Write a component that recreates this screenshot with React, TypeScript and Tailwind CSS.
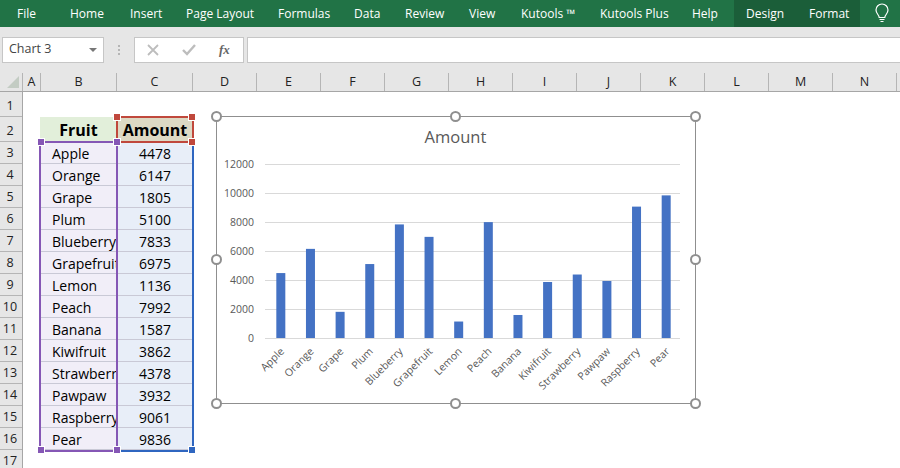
const TABS: [string, number][] = [
  ['File', 53], ['Home', 60], ['Insert', 56], ['Page Layout', 92], ['Formulas', 76], ['Data', 51],
  ['Review', 64], ['View', 52], ['Kutools ™', 79], ['Kutools Plus', 92], ['Help', 42],
];
const COLS: [string, number][] = [
  ['A', 18], ['B', 76], ['C', 76], ['D', 64], ['E', 64], ['F', 64], ['G', 64], ['H', 64],
  ['I', 64], ['J', 64], ['K', 64], ['L', 64], ['M', 64], ['N', 64],
];
const DATA: [string, number][] = [
  ['Apple', 4478], ['Orange', 6147], ['Grape', 1805], ['Plum', 5100], ['Blueberry', 7833],
  ['Grapefruit', 6975], ['Lemon', 1136], ['Peach', 7992], ['Banana', 1587], ['Kiwifruit', 3862],
  ['Strawberry', 4378], ['Pawpaw', 3932], ['Raspberry', 9061], ['Pear', 9836],
];
const ROWS = Array.from({ length: 17 }, (_, i) => i + 1);
const TICKS = [0, 2000, 4000, 6000, 8000, 10000, 12000];

function Square({ cls, pos }: { cls: string; pos: string }) {
  return <div className={`absolute w-[8px] h-[8px] border border-white ${cls} ${pos}`} />;
}

function Handle({ pos }: { pos: string }) {
  return <div className={`absolute w-[11px] h-[11px] rounded-full bg-white border-2 border-[#8f8f8f] ${pos}`} />;
}

function Chart() {
  // chart drawing, coords relative to chart box (216,116)
  const x0 = 48, x1 = 463, y0 = 221, h = 174;
  const step = (x1 - x0) / DATA.length;
  return (
    <div className="absolute left-[216px] top-[116px] w-[480px] h-[288px] bg-white border border-[#8f8f8f]">
      <svg width={478} height={286} className="absolute left-0 top-0">
        <text x={238.5} y={26} textAnchor="middle" fontSize="16.5" fill="#595959" fontFamily="'Open Sans', sans-serif">Amount</text>
        {TICKS.map(t => {
          const y = y0 - (t / 12000) * h;
          return (
            <g key={t}>
              <line x1={x0} x2={x1} y1={y + 0.5} y2={y + 0.5} stroke="#d9d9d9" />
              <text x={37} y={y + 4} textAnchor="end" fontSize="10.5" fill="#595959" fontFamily="'Open Sans', sans-serif">{t}</text>
            </g>
          );
        })}
        {DATA.map(([name, v], i) => {
          const cx = x0 + 1 + step * (i + 0.5);
          const bh = (v / 12000) * h;
          return (
            <g key={name}>
              <rect x={cx - 4.5} y={y0 - bh} width={9} height={bh} fill="#4472c4" />
              <text
                transform={`translate(${cx + 4},${y0 + 14}) rotate(-45)`}
                textAnchor="end"
                fontSize="10.5"
                fill="#595959"
                fontFamily="'Open Sans', sans-serif"
              >
                {name}
              </text>
            </g>
          );
        })}
      </svg>
      <Handle pos="left-[-6px] top-[-6px]" />
      <Handle pos="left-[233px] top-[-6px]" />
      <Handle pos="right-[-6px] top-[-6px]" />
      <Handle pos="left-[-6px] top-[137px]" />
      <Handle pos="right-[-6px] top-[137px]" />
      <Handle pos="left-[-6px] bottom-[-6px]" />
      <Handle pos="left-[233px] bottom-[-6px]" />
      <Handle pos="right-[-6px] bottom-[-6px]" />
    </div>
  );
}

export default function App() {
  return (
    <div className="relative w-[900px] h-[468px] overflow-hidden bg-white font-['Open_Sans',sans-serif] text-black">
      {/* Ribbon tabs */}
      <div className="flex items-center h-[27px] bg-[#217346] text-white text-[12px] pl-[17px]">
        {TABS.map(([t, w]) => (
          <div key={t} className="shrink-0 whitespace-nowrap" style={{ width: w }}>{t}</div>
        ))}
        <div className="flex items-center h-full w-[126px] bg-[#1b5e39] pl-[12px]">
          <div className="w-[63px]">Design</div>
          <div>Format</div>
        </div>
        <svg width="16" height="21" viewBox="0 0 16 21" className="ml-[14px]" fill="none" stroke="#fff" strokeWidth="1.2">
          <path d="M5.2 14.5c0-2.5-3.2-3.8-3.2-7.5a6 6 0 0 1 12 0c0 3.7-3.200 5-3.200 7.500z" />
          <path d="M5.500 16.500h5M6.500 18.500h3" />
        </svg>
      </div>

      {/* Formula bar */}
      <div className="flex items-center h-[46px] bg-[#e6e6e6] pl-[2px] pb-[1px]">
        <div className="flex items-center justify-between w-[102px] h-[26px] bg-white border border-[#c6c6c6] pl-[6px] pr-[6px] text-[12.500px] text-[#444]">
          <span>Chart 3</span>
          <div className="w-0 h-0 border-l-[4px] border-r-[4px] border-t-[4px] border-l-transparent border-r-transparent border-t-[#777]" />
        </div>
        <div className="flex flex-col gap-[2px] ml-[14px] w-[2px]">
          <div className="w-[2px] h-[2px] bg-[#b5b5b5]" />
          <div className="w-[2px] h-[2px] bg-[#b5b5b5]" />
          <div className="w-[2px] h-[2px] bg-[#b5b5b5]" />
        </div>
        <div className="flex items-center w-[110px] h-[26px] ml-[14px] bg-white border border-[#c6c6c6]">
          <svg width="12" height="12" viewBox="0 0 12 12" className="ml-[12px]" stroke="#bdbdbd" strokeWidth="1.800" fill="none">
            <path d="M1 1l10 10M11 1L1 11" />
          </svg>
          <svg width="14" height="12" viewBox="0 0 14 12" className="ml-[23px]" stroke="#bdbdbd" strokeWidth="2.400" fill="none">
            <path d="M1 6l4 4 8-9" />
          </svg>
          <span className="ml-[23px] font-['Liberation_Serif',serif] italic font-bold text-[13px] text-[#666]">fx</span>
        </div>
        <div className="flex-1 h-[26px] ml-[3px] bg-white border border-[#c6c6c6] border-r-0" />
      </div>

      {/* Column headers */}
      <div className="flex h-[19px] bg-[#e6e6e6] border-b border-[#a6a6a6] text-[12.500px] text-[#222]">
        <div className="relative w-[23px] shrink-0 border-r border-[#b5b5b5]">
          <div className="absolute left-[7px] top-[3px] w-0 h-0 border-l-[12px] border-b-[12px] border-l-transparent border-b-[#c3ccc3]" />
        </div>
        {COLS.map(([c, w]) => (
          <div key={c} className="flex items-center justify-center shrink-0 border-r border-[#b5b5b5]" style={{ width: w }}>{c}</div>
        ))}
      </div>

      {/* Sheet */}
      <div className="flex h-[376px]">
        <div className="w-[23px] shrink-0 bg-[#e6e6e6] border-r border-[#a6a6a6] text-[12.500px] text-[#222]">
          {ROWS.map(r => (
            <div
              key={r}
              className={`flex items-end justify-center pr-[2px] border-b border-[#b5b5b5] ${r < 3 ? 'h-[25px]' : 'h-[22px]'}`}
            >
              {r}
            </div>
          ))}
        </div>
        <div className="pl-[17px] pt-[25px]">
          <div className="relative w-[152px]">
            <div className="grid grid-cols-[77px_76px] text-[14px]">
              <div className="flex items-center justify-center h-[25px] bg-[#e2efda] font-bold text-[16px]">Fruit</div>
              <div className="flex items-center justify-center h-[25px] bg-[#ddd9c4] font-bold text-[16px]">Amount</div>
              {DATA.map(([name, v]) => (
                <div key={name} className="contents">
                  <div className="flex items-center h-[22px] pt-[2px] pl-[12px] pr-[2px] bg-[#f1eef8] border-b border-[#c9c9d6] overflow-hidden whitespace-nowrap">{name}</div>
                  <div className="flex items-center justify-center h-[22px] pt-[2px] bg-[#e8eef8] border-b border-[#c9c9d6]">{v}</div>
                </div>
              ))}
            </div>
            {/* range selection outlines */}
            <div className="absolute left-[-1px] top-[24px] w-[79px] h-[311px] border-2 border-[#8557b5]" />
            <div className="absolute left-[78px] top-[25px] w-[76px] h-[310px] border-2 border-[#2f66c0] border-l-0 border-t-0" />
            <div className="absolute left-[76px] top-[-1px] w-[78px] h-[27px] border-2 border-[#c0483c]" />
            <Square cls="bg-[#c0483c]" pos="left-[73px] top-[-4px]" />
            <Square cls="bg-[#c0483c]" pos="left-[148px] top-[-4px]" />
            <Square cls="bg-[#c0483c]" pos="left-[148px] top-[21px]" />
            <Square cls="bg-[#8557b5]" pos="left-[-3px] top-[21px]" />
            <Square cls="bg-[#8557b5]" pos="left-[73px] top-[21px]" />
            <Square cls="bg-[#8557b5]" pos="left-[-3px] top-[329px]" />
            <Square cls="bg-[#8557b5]" pos="left-[73px] top-[329px]" />
            <Square cls="bg-[#2f66c0]" pos="left-[148px] top-[329px]" />
          </div>
        </div>
      </div>

      <Chart />
    </div>
  );
}
